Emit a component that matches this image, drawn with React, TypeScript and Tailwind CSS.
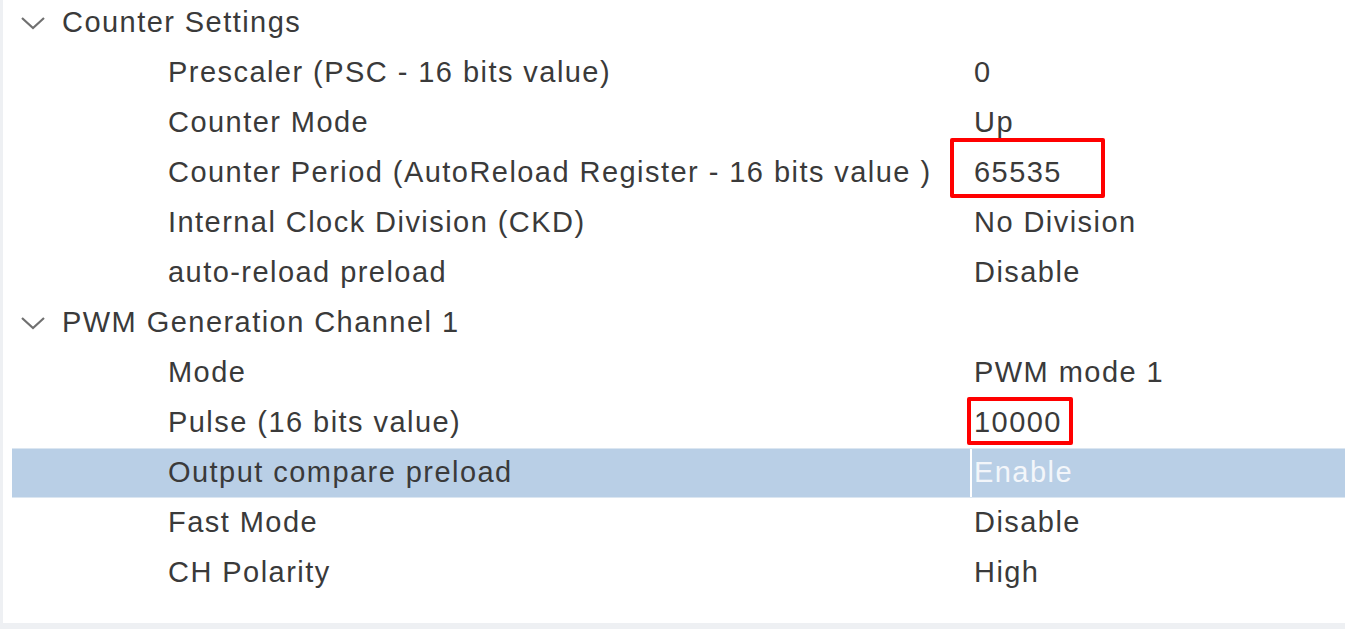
import React from 'react';

type Row = { label: string; value: string; box?: 'period' | 'pulse'; selected?: boolean };

const groups: { title: string; rows: Row[] }[] = [
  {
    title: 'Counter Settings',
    rows: [
      { label: 'Prescaler (PSC - 16 bits value)', value: '0' },
      { label: 'Counter Mode', value: 'Up' },
      { label: 'Counter Period (AutoReload Register - 16 bits value )', value: '65535', box: 'period' },
      { label: 'Internal Clock Division (CKD)', value: 'No Division' },
      { label: 'auto-reload preload', value: 'Disable' },
    ],
  },
  {
    title: 'PWM Generation Channel 1',
    rows: [
      { label: 'Mode', value: 'PWM mode 1' },
      { label: 'Pulse (16 bits value)', value: '10000', box: 'pulse' },
      { label: 'Output compare preload', value: 'Enable', selected: true },
      { label: 'Fast Mode', value: 'Disable' },
      { label: 'CH Polarity', value: 'High' },
    ],
  },
];

function Chevron() {
  return (
    <svg width="26" height="16" viewBox="0 0 26 16" className="shrink-0">
      <path d="M2 3 L13 13 L24 3" fill="none" stroke="#707070" strokeWidth="2.2" />
    </svg>
  );
}

export default function App() {
  return (
    <div className="w-[1345px] h-[629px] overflow-hidden bg-[#eef0f3] flex flex-col text-[#3a3a3a] font-['Liberation_Sans',Arial,sans-serif]">
      <div className="flex-1 ml-[3px] bg-white overflow-hidden">
        <div className="-mt-[2px]">
          {groups.map((g) => (
            <div key={g.title}>
              <div className="h-[50px] flex items-center pl-[17px] gap-[16px] text-[29px] tracking-[1.45px]">
                <Chevron />
                <span>{g.title}</span>
              </div>
              {g.rows.map((r) => (
                <div
                  key={r.label}
                  className={
                    'h-[50px] flex items-stretch text-[29px] tracking-[1.45px] ml-[9px] ' +
                    (r.selected ? 'bg-[#b9cfe6] border-y border-[#dbe6f1]' : '')
                  }
                >
                  <div className="w-[958px] shrink-0 pl-[156px] flex items-center whitespace-nowrap">{r.label}</div>
                  <div
                    className={
                      'relative flex-1 flex items-center ' +
                      (r.selected ? 'border-l-2 border-white text-[#f3f6fa] pl-[2px]' : 'pl-[4px]')
                    }
                  >
                    {r.value}
                    {r.box === 'period' && (
                      <div className="absolute left-[-20px] top-[-10px] w-[155px] h-[60px] border-[4px] border-[#ff0000] rounded-[2px]" />
                    )}
                    {r.box === 'pulse' && (
                      <div className="absolute left-[-3px] top-[-1px] w-[106px] h-[48px] border-[4px] border-[#ff0000] rounded-[2px]" />
                    )}
                  </div>
                </div>
              ))}
            </div>
          ))}
        </div>
      </div>
      <div className="h-[6px] shrink-0" />
    </div>
  );
}
